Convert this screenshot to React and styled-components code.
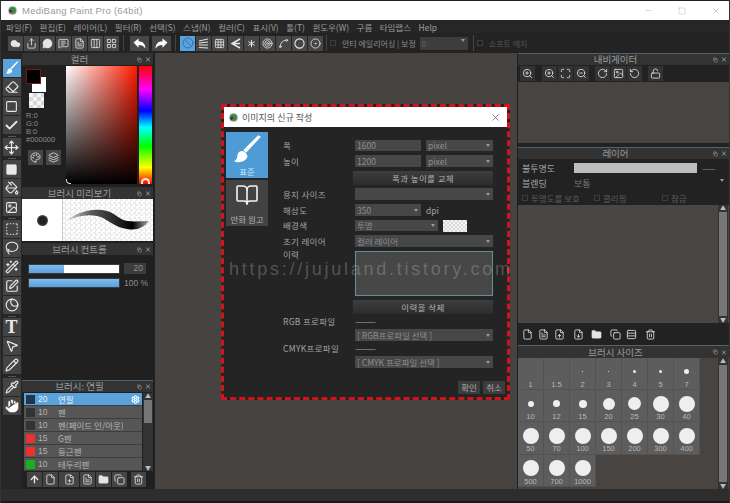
import React from 'react';
import styled, { createGlobalStyle } from 'styled-components';
import {
  Cloud, Share, MessageCircle, MessageSquareText, FileText, Columns3, LayoutGrid, Ban, Grid3x3, Target, Circle, CircleDot,
  Eraser, Square, Check, Move, PaintBucket, Pipette, Hand, Lasso, WandSparkles, SquareDashed, Pencil, BookOpen,
  ZoomIn, ZoomOut, Maximize, RotateCw, RotateCcw, LockOpen, Settings, Trash2, Folder, Copy, File, FilePlus, FileUp, FileDown, Palette, Layers, Minus, X, ArrowUp, SquarePen, Eclipse, MousePointer2, Spline, Asterisk, Rows3, Image
} from 'lucide-react';

const Global = createGlobalStyle`
  html, body { margin: 0; padding: 0; background: #1c1c1c; }
  * { box-sizing: border-box; }
  #root { width: 730px; height: 503px; overflow: hidden; }
`;

const Shell = styled.div`
  position: relative; width: 730px; height: 503px; overflow: hidden;
  background: #1f1f1f; display: flex; flex-direction: column;
  border-top: 1px solid #222; border-left: 1px solid #333; border-right: 1px solid #333;
  font-family: "Noto Sans CJK KR", "Noto Sans", sans-serif; color: #a8a8a8; font-size: 9px;
`;
const TitleBar = styled.div`
  height: 19px; flex: none; background: #fff; display: flex; align-items: center; padding-left: 7px; gap: 5px;
  color: #9a9a9a; font-size: 9.5px; font-family: "Liberation Sans", sans-serif;
`;
const TitleText = styled.span`flex: 1; letter-spacing: .25px;`;
const WinBtns = styled.div`display: flex; align-items: center; gap: 25px; padding-right: 8px; color: #9a9a9a;`;
const Logo = styled.span`
  width: 9px; height: 9px; border-radius: 50%; flex: none;
  background: conic-gradient(#2f8f3c 0 45%, #d24a2c 45% 60%, #333 60% 80%, #2f8f3c 80%);
  border: 1px solid #9ab;
`;
const MenuBar = styled.div`
  height: 13px; flex: none; background: #262626; display: flex; align-items: center; padding-left: 5px; gap: 7.5px; font-size: 8.5px; color: #9c9c9c; white-space: nowrap;
`;
const ToolBar = styled.div`
  height: 20px; flex: none; background: #232323; display: flex; align-items: center; padding-left: 7px; gap: 1px; color: #8c8c8c; font-size: 8px; white-space: nowrap;
`;
const TB = styled.span`
  width: ${p => p.$w || 15}px; height: 15px; flex: none; display: flex; align-items: center; justify-content: center;
  background: ${p => p.$on ? '#5aa2dc' : '#474747'}; color: ${p => p.$on ? '#2f6fa8' : '#e6e6e6'};
  margin-left: ${p => p.$ml || 0}px;
`;
const TBSep = styled.span`width: 1px; height: 16px; background: #444; flex: none; margin: 0 ${p => p.$m || 4}px;`;
const CorrBox = styled.span`
  width: 48px; height: 13px; background: #3d3d3d; color: #666; padding-left: 2px; line-height: 13px; margin: 0 2px 0 3px;
  display: flex; justify-content: space-between; padding-right: 3px; font-size: 8px;
`;
const AntiText = styled.span`margin-left: 5px;`;
const Muted = styled.span`color: #555; margin-left: 5px;`;
const Main = styled.div`flex: 1; min-height: 0; display: flex;`;
const Tools = styled.div`width: 21px; flex: none; background: #262626; display: flex; flex-direction: column; align-items: center; padding-top: 6px;`;
const ToolBtn = styled.span`
  width: 18px; height: 18px; flex: none; margin-bottom: 1px; display: flex; align-items: center; justify-content: center;
  background: ${p => p.$on ? '#5aa2dc' : '#444'}; color: #e8e8e8;
  font-family: "Liberation Serif", serif; font-size: 18px; font-weight: 700;
`;
const ToolSep = styled.span`width: 8px; height: 1px; background: #555; margin: 1px 0; flex: none;`;
const LeftPanel = styled.div`width: 131px; flex: none; display: flex; flex-direction: column; background: #202020;`;
const Header = styled.div`
  height: ${p => p.$h || 12}px; flex: none; display: flex; align-items: center; background: #333;
  border-top: 1px solid ${p => p.$line ? '#4c6473' : '#333'}; color: #9b9b9b; font-size: 9.5px; line-height: 11px;
`;
const HeaderText = styled.span`flex: 1; text-align: center; white-space: nowrap;`;
const HeaderBtns = styled.span`width: 16px; flex: none; display: flex; gap: 3px; justify-content: flex-end; padding-right: 2px; color: #bbb; align-items: center;`;
const ColorBody = styled.div`height: 122px; flex: none; display: flex; padding: 1px 1px 0 0; background: #202020;`;
const ColorLeft = styled.div`width: 44px; flex: none; display: flex; flex-direction: column; padding: 3px 0 0 4px;`;
const Swatches = styled.div`position: relative; width: 22px; height: 24px; flex: none;`;
const FgSwatch = styled.span`position: absolute; left: 0; top: 0; width: 15px; height: 15px; background: #000; border: 1px solid #7c1414; z-index: 1;`;
const BgSwatch = styled.span`position: absolute; left: 6px; top: 8px; width: 14px; height: 15px; background: #fff;`;
const Checker = styled.span`
  display: block; width: ${p => p.$w || 15}px; height: ${p => p.$h || 15}px; flex: none; margin: ${p => p.$m || '0'};
  background: repeating-conic-gradient(#d8d8d8 0 25%, #f6f6f6 0 50%) 0 0 / ${p => p.$t || 8}px ${p => p.$t || 8}px;
`;
const RGB = styled.div`margin: 4px 0 0 0; font-size: 7.5px; line-height: 8px; color: #8d8d8d; font-family: "Liberation Sans", sans-serif;`;
const PalRow = styled.div`display: flex; gap: 3px; margin: 6px 0 0 2px;`;
const PalBtn = styled.span`width: 15px; height: 15px; background: #464646; display: flex; align-items: center; justify-content: center; color: #ddd;`;
const SV = styled.div`
  width: 71px; height: 118px; flex: none; position: relative;
  background: linear-gradient(to bottom, transparent, #000), linear-gradient(to right, #fff, #ff1a00);
`;
const Cursor = styled.span`position: absolute; left: 0; bottom: 0; width: 5px; height: 5px; border-left: 1px solid #ddd; border-bottom: 1px solid #ddd; border-radius: 0 0 0 4px;`;
const Hue = styled.div`
  width: 13px; height: 118px; flex: none; margin-left: 2px; position: relative;
  background: linear-gradient(to bottom, #f00 0%, #f0f 20%, #00f 38%, #0ff 52%, #0f0 68%, #ff0 86%, #f00 100%);
`;
const HueKnob = styled.span`position: absolute; left: 2px; bottom: 0; width: 9px; height: 6px; border: 2px solid #eee; border-bottom: 0; border-radius: 5px 5px 0 0;`;
const Preview = styled.div`height: 42px; flex: none; display: flex; background: #fff; margin-bottom: 2px;`;
const DotPane = styled.div`width: 41px; flex: none; display: flex; align-items: center; justify-content: center; border-right: 1px solid #ccc;`;
const Dot = styled.span`width: 11px; height: 11px; border-radius: 50%; background: radial-gradient(circle, #222 0 45%, #444 65%, #8888 100%);`;
const StrokePane = styled.div`flex: 1; background: repeating-conic-gradient(#ececec 0 25%, #fff 0 50%) 0 0 / 5px 5px;`;
const ControlBody = styled.div`height: 125px; flex: none; padding: 8px 0 0 6px; display: flex; flex-direction: column; gap: 3px;`;
const SliderRow = styled.div`display: flex; align-items: center; gap: 4px; height: 11px; font-size: 8.5px; color: #8d8d8d; font-family: "Liberation Sans", sans-serif;`;
const Track = styled.div`width: 92px; height: 10px; flex: none; background: #fff; border: 1px solid #3a3a3a;`;
const Fill = styled.div`height: 100%; background: linear-gradient(#7cbcf0, #5ba0db);`;
const NumBox = styled.span`width: 22px; height: 11px; background: #3c3c3c; text-align: right; padding-right: 3px; line-height: 11px;`;
const ListBody = styled.div`flex: 1; display: flex; flex-direction: column; padding: 1px 1px 0 2px; min-height: 0;`;
const ListWrap = styled.div`height: 78px; display: flex; flex: none;`;
const Rows = styled.div`width: 118px; flex: none; display: flex; flex-direction: column;`;
const BrushRow = styled.div`
  height: 13px; flex: none; display: flex; align-items: center; background: ${p => p.$on ? '#5aa2dc' : '#565656'};
  color: ${p => p.$on ? '#e8f2fb' : '#b3b3b3'}; border-bottom: 1px solid #3d3d3d; font-size: 8.5px; padding-left: 2px; white-space: nowrap;
`;
const BrushChip = styled.span`width: 9px; height: 9px; flex: none; background: ${p => p.$c};`;
const BrushSize = styled.span`width: 20px; padding-left: 3px; flex: none; font-family: "Liberation Sans", sans-serif;`;
const BrushName = styled.span`flex: 1; padding-left: 3px;`;
const Scroll = styled.div`
  width: ${p => p.$w || 10}px; flex: none; background: #333; margin: 0 ${p => p.$mr || 0}px 0 1px;
  display: flex; flex-direction: column; align-items: center; justify-content: space-between; color: #bbb; font-size: 6px; line-height: 6px;
`;
const Thumb = styled.div`width: 8px; flex: 1; margin: ${p => p.$m || '1px 0 42px'}; background: #777;`;
const IconRow = styled.div`display: flex; align-items: center; gap: 1px; height: ${p => p.$h || 16}px; flex: none; padding-left: ${p => p.$pl || 3}px; background: ${p => p.$bg || 'transparent'};`;
const IconBtn = styled.span`
  width: ${p => p.$w || 15}px; height: 15px; flex: none; display: flex; align-items: center; justify-content: center; background: ${p => p.$bg || '#444'}; color: #e4e4e4;
  margin-left: ${p => p.$ml || 0}px;
`;
const Canvas = styled.div`width: 362px; margin-left: 2px; flex: none; background: #474341;`;
const RightPanel = styled.div`width: 211px; margin-left: 1px; flex: none; display: flex; flex-direction: column; background: #222;`;
const NavBody = styled.div`height: 61px; flex: none; background: #484442; margin-bottom: 4px;`;
const LayerForm = styled.div`height: 46px; flex: none; padding: 2px 0 0 4px; display: flex; flex-direction: column; gap: 1px; font-size: 9px; color: #999;`;
const LRow = styled.div`height: 14px; display: flex; align-items: center; flex: none;`;
const LLabel = styled.span`width: 52px; flex: none; color: #a5a5a5;`;
const Opac = styled.span`width: 123px; height: 10px; background: #bdbdbd; flex: none;`;
const Dash = styled.span`color: #888; margin-left: 5px; font-size: 8px;`;
const Blend = styled.span`flex: 1; color: #777; display: flex; justify-content: space-between; padding-right: 5px;`;
const Chk = styled.span`display: flex; align-items: center; gap: 3px; color: #5c5c5c; width: ${p => p.$w}px; font-size: 8.5px; white-space: nowrap;`;
const ChkBox = styled.span`width: 6px; height: 6px; border: 1px solid #3c3c3c; flex: none;`;
const LayerList = styled.div`height: 118px; flex: none; display: flex; background: #4a4644;`;
const LFill = styled.div`flex: 1;`;
const SizesBody = styled.div`flex: 1; min-height: 0; display: flex; background: #484442;`;
const SizeGrid = styled.div`width: 182px; display: grid; grid-template-columns: repeat(7, 26px); grid-auto-rows: 32.2px; align-content: start; flex: none;`;
const SizeCell = styled.div`
  background: #5d5d5d; border-right: 1px solid #535353; border-bottom: 1px solid #535353;
  display: flex; flex-direction: column; align-items: center; color: #b8b8b8; font-size: 7.5px; line-height: 9px; padding-bottom: 1px; font-family: "Liberation Sans", sans-serif;
`;
const SizeDotBox = styled.div`height: 22px; width: 100%; display: flex; align-items: center; justify-content: center; flex: none; padding-top: 5px;`;
const SizeDot = styled.span`border-radius: 50%; background: #eee; flex: none;`;
const SizeSpacer = styled.div`flex: 1;`;
const StatusBar = styled.div`height: 14px; flex: none; background: #2d2d2d; border-bottom: 2px solid #1a1a1a;`;

const Dialog = styled.div`
  position: absolute; left: 220px; top: 103px; width: 289px; height: 296px;
  border: 3px dashed #d3121a; background: #242424; display: flex; flex-direction: column;
`;
const DlgTitle = styled.div`
  height: 20px; flex: none; background: #fff; display: flex; align-items: center; padding: 0 6px 0 5px; gap: 4px; color: #555; font-size: 9px;
`;
const DlgName = styled.span`flex: 1;`;
const DlgBody = styled.div`flex: 1; display: flex; min-height: 0; position: relative;`;
const Side = styled.div`width: 59px; padding: 5px 0 0 2px; flex: none; display: flex; flex-direction: column; gap: 2px;`;
const SideTab = styled.div`
  width: 42px; height: 46px; display: flex; flex-direction: column; align-items: center; justify-content: flex-end;
  background: ${p => p.$on ? '#4f9bd6' : '#434343'}; color: ${p => p.$on ? '#cfe5f6' : '#b0b0b0'}; font-size: 8.5px; line-height: 11px; gap: 1px; padding-bottom: 1px; white-space: nowrap;
`;
const Form = styled.div`flex: 1; display: flex; flex-direction: column; gap: 4px; padding: 13px 0 0 0;`;
const FRow = styled.div`
  height: ${p => p.$h}px; flex: none; display: grid; grid-template-columns: 72px 66px 5px 67px; align-items: start; color: #a3a3a3; font-size: 8.5px; line-height: ${p => p.$h}px;
`;
const FLabel = styled.span`white-space: nowrap; letter-spacing: .3px; height: ${p => p.$lh ? p.$lh + 'px' : 'auto'}; line-height: ${p => p.$lh ? p.$lh + 'px' : 'inherit'};`;
const Field = styled.span`
  height: ${p => p.$h || 12}px; background: #474747; color: #8d8d8d; font-size: 8.5px; line-height: ${p => p.$h || 12}px; padding: 0 3px 0 2px;
  display: flex; justify-content: space-between; align-items: center; overflow: hidden; white-space: nowrap;
`;
const Wide = styled(Field)`grid-column: 2 / 5;`;
const Arrow = styled.span`width: 0; height: 0; border: 2px solid transparent; border-top: 3px solid #999; margin-top: 2px; flex: none;`;
const SwapBtn = styled.button`
  grid-column: 2 / 5; margin-left: -2px; height: 14px; border: 0; padding: 0; font: inherit; color: #b2b2b2; font-size: 8.5px; line-height: 13px;
  background: linear-gradient(#3e3e3e, #2c2c2c); width: calc(100% + 2px); letter-spacing: .4px;
`;
const BgField = styled.div`grid-column: 2 / 5; display: flex; gap: 5px; align-items: start;`;
const ShortField = styled(Field)`width: 83px; flex: none;`;
const Memo = styled.div`grid-column: 2 / 5; height: 45px; background: #474747; border: 1px solid #6d8a9a;`;
const Foot = styled.div`position: absolute; right: 2px; bottom: 3px; display: flex; gap: 3px;`;
const FootBtn = styled.button`width: 22px; height: 13px; border: 0; padding: 0; background: #3c3c3c; color: #a8a8a8; font: inherit; font-size: 8.5px; line-height: 13px;`;
const Watermark = styled.div`
  position: absolute; left: 228px; top: 255px; font-family: "Liberation Sans", sans-serif; font-size: 18px; letter-spacing: 2.75px; line-height: 26px;
  color: rgba(190,190,190,.32); white-space: nowrap; pointer-events: none;
`;

const I = ({ c: C, s = 11, f, w = 1.8 }) => <C size={s} strokeWidth={f ? 1 : w} fill={f ? 'currentColor' : 'none'} />;
const Lines = ({ v }) => (
  <svg width="11" height="11" viewBox="0 0 11 11" stroke="currentColor" fill="none" strokeWidth="1">
    {v === 'p' ? <path d="M1 3 10 1M1 5 10 4M1 7 10 7M1 9.5 10 10" /> : <path d="M10 1 2 5.5 10 10M2 5.5H10" strokeWidth="1.5" />}
  </svg>
);
const Arc = ({ flip }) => (
  <svg width="15" height="11" viewBox="0 0 15 12" fill="#fff" style={flip ? { transform: 'scaleX(-1)' } : undefined}>
    <path d="M1 5 6.5 .5V3.5C11 3.5 14 6.5 14 11.5 12 8.5 10 7.5 6.5 7.5V10.5Z" />
  </svg>
);
const Brush = ({ s = 14, color = '#fff' }) => (
  <svg width={s} height={s} viewBox="0 0 16 16" fill={color}>
    <path d="M15 1 7.5 9 6.5 8 14 .5Z" stroke={color} strokeWidth=".6" />
    <path d="M5.5 8.5C3.5 8.5 3 10 2.8 11.5 2.6 13 2 13.5 1 14 3.5 15 7.5 14.5 8.2 11.5 8.4 10.5 7 8.8 5.5 8.5Z" />
  </svg>
);
const Stroke = () => (
  <svg width="90" height="42" viewBox="0 0 90 42">
    <defs><linearGradient id="st" x1="0" x2="1" y1="0" y2="0"><stop offset="0" stopColor="#000" stopOpacity=".08" /><stop offset=".3" stopColor="#222" stopOpacity=".75" /><stop offset=".8" stopColor="#000" /><stop offset="1" stopColor="#000" stopOpacity=".3" /></linearGradient></defs>
    <path d="M4 22C12 14 26 10 38 11 52 12 54 20 64 22 72 23 80 22 86 22 82 28 74 32 64 30 50 28 44 19 34 17 24 15 14 17 4 22Z" fill="url(#st)" />
  </svg>
);

const menus = ['파일(F)', '편집(E)', '레이어(L)', '필터(R)', '선택(S)', '스냅(N)', '컬러(C)', '표시(V)', '툴(T)', '윈도우(W)', '구름', '타임랩스', 'Help'];
const Head = ({ t, line, h }) => (
  <Header $line={line} $h={h}>
    <HeaderText>{t}</HeaderText>
    <HeaderBtns><Copy size={6} strokeWidth={2} /><X size={7} strokeWidth={3} /></HeaderBtns>
  </Header>
);
const sizes = [[1, 0], [1.5, 0], [2, 1], [3, 1], [4, 3], [5, 3], [7, 5], [10, 6], [12, 7], [15, 8], [20, 12], [25, 13], [30, 16], [40, 16], [50, 16], [70, 16], [100, 16], [150, 16], [200, 16], [300, 16], [400, 16], [500, 16], [700, 16], [1000, 16]];
const brushes = [['#22354a', 20, '연필', 1], ['#333', 10, '펜'], ['#333', 10, '펜(페이드 인/아웃)'], ['#ef3030', 15, 'G펜'], ['#ef3030', 15, '둥근펜'], ['#18b01e', 10, '테두리펜']];

export default function App() {
  return (
    <Shell>
      <Global />
      <TitleBar>
        <Logo />
        <TitleText>MediBang Paint Pro (64bit)</TitleText>
        <WinBtns><Minus size={9} strokeWidth={1} /><Square size={8} strokeWidth={1} /><X size={10} strokeWidth={1} /></WinBtns>
      </TitleBar>
      <MenuBar>{menus.map(m => <span key={m}>{m}</span>)}</MenuBar>
      <ToolBar>
        <TB><I c={Cloud} f /></TB><TB><I c={Share} /></TB><TB><I c={MessageCircle} f /></TB><TB><I c={MessageSquareText} /></TB><TB><I c={FileText} /></TB><TB><I c={Columns3} /></TB><TB><I c={LayoutGrid} /></TB>
        <TBSep $m={3} />
        <TB $ml={2} $w={19}><Arc /></TB><TB $ml={2} $w={19}><Arc flip /></TB>
        <TBSep $m={3} />
        <TB $on><I c={Ban} s={12} /></TB><TB><Lines v="p" /></TB><TB><I c={Grid3x3} /></TB><TB><Lines /></TB><TB><I c={Asterisk} s={13} /></TB><TB><I c={Target} /></TB><TB><I c={Spline} /></TB><TB><I c={Circle} w={2.4} /></TB><TB><I c={CircleDot} /></TB>
        <TBSep $m={2} />
        <ChkBox /><AntiText>안티 에일리어싱 | 보정</AntiText>
        <CorrBox><span>0</span><Arrow /></CorrBox>
        <TBSep $m={2} />
        <ChkBox /><Muted>쇼프트 에지</Muted>
      </ToolBar>
      <Main>
        <Tools>
          <ToolBtn $on><Brush s={14} /></ToolBtn><ToolBtn><I c={Eraser} s={14} w={2} /></ToolBtn><ToolBtn><I c={Square} s={13} w={2} /></ToolBtn><ToolBtn><I c={Check} s={15} w={3} /></ToolBtn>
          <ToolSep />
          <ToolBtn><I c={Move} s={15} w={2} /></ToolBtn>
          <ToolSep />
          <ToolBtn><I c={Square} s={13} f /></ToolBtn><ToolBtn><I c={PaintBucket} s={14} w={2} /></ToolBtn><ToolBtn><I c={Image} s={13} w={2} /></ToolBtn>
          <ToolSep />
          <ToolBtn><I c={SquareDashed} s={14} /></ToolBtn><ToolBtn><I c={Lasso} s={14} /></ToolBtn><ToolBtn><I c={WandSparkles} s={14} w={2} /></ToolBtn><ToolBtn><I c={SquarePen} s={14} w={2} /></ToolBtn><ToolBtn><I c={Eclipse} s={14} w={2} /></ToolBtn>
          <ToolSep />
          <ToolBtn>T</ToolBtn><ToolBtn><I c={MousePointer2} s={14} w={2} /></ToolBtn><ToolBtn><I c={Pencil} s={14} w={2} /></ToolBtn>
          <ToolSep />
          <ToolBtn><I c={Pipette} s={14} w={2} /></ToolBtn><ToolBtn><Hand size={16} strokeWidth={1.2} fill="#fff" color="#555" /></ToolBtn>
        </Tools>
        <LeftPanel>
          <Head t="컬러" />
          <ColorBody>
            <ColorLeft>
              <Swatches><FgSwatch /><BgSwatch /></Swatches>
              <Checker $m="0 0 0 3px" />
              <RGB>R:0<br />G:0<br />B:0<br />#000000</RGB>
              <PalRow><PalBtn><I c={Palette} s={11} /></PalBtn><PalBtn><I c={Layers} s={11} /></PalBtn></PalRow>
            </ColorLeft>
            <SV><Cursor /></SV>
            <Hue><HueKnob /></Hue>
          </ColorBody>
          <Head t="브러시 미리보기" />
          <Preview><DotPane><Dot /></DotPane><StrokePane><Stroke /></StrokePane></Preview>
          <Head t="브러시 컨트롤" />
          <ControlBody>
            <SliderRow><Track><Fill style={{ width: '39%' }} /></Track><NumBox>20</NumBox></SliderRow>
            <SliderRow><Track><Fill style={{ width: '100%' }} /></Track><span>100 %</span></SliderRow>
          </ControlBody>
          <Head t="브러시: 연필" line />
          <ListBody>
            <ListWrap>
              <Rows>
                {brushes.map((b, i) => (
                  <BrushRow key={i} $on={b[3]}>
                    <BrushChip $c={b[0]} /><BrushSize>{b[1]}</BrushSize><BrushName>{b[2]}</BrushName>
                    {b[3] ? <Settings size={9} color="#fff" strokeWidth={3} style={{ marginRight: 2 }} /> : null}
                  </BrushRow>
                ))}
              </Rows>
              <Scroll><span>▲</span><Thumb /><span>▼</span></Scroll>
            </ListWrap>
            <IconRow>
              <IconBtn><I c={ArrowUp} s={11} w={3} /></IconBtn><IconBtn><I c={File} /></IconBtn><IconBtn $w={20}><I c={FilePlus} /></IconBtn><IconBtn><I c={FileText} /></IconBtn><IconBtn><I c={Folder} f /></IconBtn><IconBtn><I c={Copy} /></IconBtn><IconBtn $ml={3}><I c={Trash2} /></IconBtn>
            </IconRow>
          </ListBody>
        </LeftPanel>
        <Canvas />
        <RightPanel>
          <Head t="내비게이터" line />
          <IconRow $pl={2} $h={17} $bg="#222">
            <IconBtn $bg="#333"><I c={ZoomIn} /></IconBtn>
            <IconBtn $ml={6} $bg="#333"><I c={ZoomIn} /></IconBtn><IconBtn $bg="#333"><I c={Maximize} /></IconBtn><IconBtn $bg="#333"><I c={ZoomOut} /></IconBtn>
            <IconBtn $ml={5} $bg="#333"><I c={RotateCw} /></IconBtn><IconBtn $bg="#333"><I c={Image} /></IconBtn><IconBtn $bg="#333"><I c={RotateCcw} /></IconBtn>
            <IconBtn $ml={5} $bg="#333"><I c={LockOpen} /></IconBtn>
          </IconRow>
          <NavBody />
          <Head t="레이어" line />
          <LayerForm>
            <LRow><LLabel>불투명도</LLabel><Opac /><Dash>——</Dash></LRow>
            <LRow><LLabel>블렌딩</LLabel><Blend><span>보통</span><Arrow /></Blend></LRow>
            <LRow><Chk $w={72}><ChkBox />투명도를 보호</Chk><Chk $w={68}><ChkBox />클리핑</Chk><Chk $w={40}><ChkBox />잠금</Chk></LRow>
          </LayerForm>
          <LayerList><LFill /><Scroll $w={10} $mr={1}><span>▲</span><Thumb $m="1px 0 1px" /><span>▼</span></Scroll></LayerList>
          <IconRow $pl={2} $h={22}>
            <IconBtn $bg="#222"><I c={File} /></IconBtn><IconBtn $bg="#222"><I c={FileText} /></IconBtn><IconBtn $bg="#222"><I c={FileUp} /></IconBtn><IconBtn $bg="#222" $w={20}><I c={FileDown} /></IconBtn><IconBtn $bg="#222"><I c={Folder} f /></IconBtn>
            <IconBtn $ml={3} $bg="#222"><I c={Copy} /></IconBtn><IconBtn $bg="#222"><I c={Rows3} /></IconBtn><IconBtn $ml={3} $bg="#222"><I c={Trash2} /></IconBtn>
          </IconRow>
          <Head t="브러시 사이즈" line h={13} />
          <SizesBody>
            <SizeGrid>
              {sizes.map(([n, d]) => (
                <SizeCell key={n}>
                  <SizeDotBox><SizeDot style={{ width: d, height: d }} /></SizeDotBox>
                  <SizeSpacer /><span>{n}</span>
                </SizeCell>
              ))}
            </SizeGrid>
            <LFill />
            <Scroll $w={10} $mr={1}><span>▲</span><Thumb $m="1px 0 1px" /><span>▼</span></Scroll>
          </SizesBody>
        </RightPanel>
      </Main>
      <StatusBar />
      <Dialog>
        <DlgTitle><Logo /><DlgName>이미지의 신규 작성</DlgName><X size={11} strokeWidth={1.3} color="#333" /></DlgTitle>
        <DlgBody>
          <Side>
            <SideTab $on><Brush s={30} />표준</SideTab>
            <SideTab><BookOpen size={24} color="#f4f4f4" strokeWidth={1.6} style={{ marginBottom: 6 }} />만화 원고</SideTab>
          </Side>
          <Form>
            <FRow $h={11}><FLabel>폭</FLabel><Field $h={11}>1600</Field><span /><Field $h={11}>pixel<Arrow /></Field></FRow>
            <FRow $h={12}><FLabel>높이</FLabel><Field>1200</Field><span /><Field>pixel<Arrow /></Field></FRow>
            <FRow $h={13}><SwapBtn>폭과 높이를 교체</SwapBtn></FRow>
            <FRow $h={12}><FLabel>용지 사이즈</FLabel><Wide><span /><Arrow /></Wide></FRow>
            <FRow $h={12}><FLabel>해상도</FLabel><Field>350<Arrow /></Field><span /><span>dpi</span></FRow>
            <FRow $h={11}><FLabel>배경색</FLabel><BgField><ShortField $h={11}>투명<Arrow /></ShortField><Checker $w={24} $h={12} $t={4} /></BgField></FRow>
            <FRow $h={12}><FLabel>초기 레이어</FLabel><Wide>컬러 레이어<Arrow /></Wide></FRow>
            <FRow $h={45}><FLabel $lh={6}>이력</FLabel><Memo /></FRow>
            <FRow $h={13}><SwapBtn>이력을 삭제</SwapBtn></FRow>
            <FRow $h={8}><FLabel $lh={9}>RGB 프로파일</FLabel><span>———</span></FRow>
            <FRow $h={12}><span /><Wide>[ RGB프로파일 선택 ]<Arrow /></Wide></FRow>
            <FRow $h={7}><FLabel $lh={6}>CMYK프로파일</FLabel><span>———</span></FRow>
            <FRow $h={12}><span /><Wide>[ CMYK 프로파일 선택 ]<Arrow /></Wide></FRow>
          </Form>
          <Foot><FootBtn>확인</FootBtn><FootBtn>취소</FootBtn></Foot>
        </DlgBody>
      </Dialog>
      <Watermark>https://jujuland.tistory.com</Watermark>
    </Shell>
  );
}
